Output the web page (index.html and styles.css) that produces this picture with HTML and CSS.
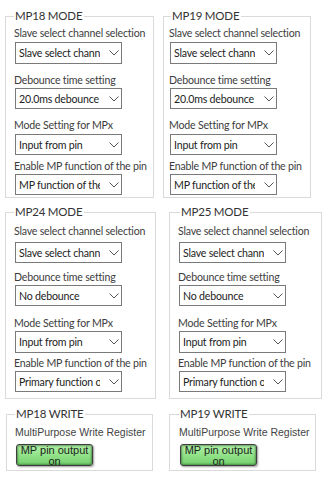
FILE: index.html
```html
<!DOCTYPE html>
<html>
<head>
<meta charset="utf-8">
<link rel="stylesheet" href="styles.css">
</head>
<body>
<div class="page">
  <div class="row row1">
    <fieldset class="box r1a">
      <legend>MP18 MODE</legend>
      <div class="lbl l1">Slave select channel selection</div>
      <div class="sel s1"><span class="val">Slave select channel</span><svg class="chev" viewBox="0 0 10 6"><polyline points="0.5,0.5 5,5 9.5,0.5"/></svg></div>
      <div class="lbl l2">Debounce time setting</div>
      <div class="sel s2"><span class="val">20.0ms debounce</span><svg class="chev" viewBox="0 0 10 6"><polyline points="0.5,0.5 5,5 9.5,0.5"/></svg></div>
      <div class="lbl l3">Mode Setting for MPx</div>
      <div class="sel s3"><span class="val">Input from pin</span><svg class="chev" viewBox="0 0 10 6"><polyline points="0.5,0.5 5,5 9.5,0.5"/></svg></div>
      <div class="lbl l4">Enable MP function of the pin</div>
      <div class="sel s4"><span class="val">MP function of the pin</span><svg class="chev" viewBox="0 0 10 6"><polyline points="0.5,0.5 5,5 9.5,0.5"/></svg></div>
    </fieldset>
    <fieldset class="box r1b">
      <legend>MP19 MODE</legend>
      <div class="lbl l1">Slave select channel selection</div>
      <div class="sel s1"><span class="val">Slave select channel</span><svg class="chev" viewBox="0 0 10 6"><polyline points="0.5,0.5 5,5 9.5,0.5"/></svg></div>
      <div class="lbl l2">Debounce time setting</div>
      <div class="sel s2"><span class="val">20.0ms debounce</span><svg class="chev" viewBox="0 0 10 6"><polyline points="0.5,0.5 5,5 9.5,0.5"/></svg></div>
      <div class="lbl l3">Mode Setting for MPx</div>
      <div class="sel s3"><span class="val">Input from pin</span><svg class="chev" viewBox="0 0 10 6"><polyline points="0.5,0.5 5,5 9.5,0.5"/></svg></div>
      <div class="lbl l4">Enable MP function of the pin</div>
      <div class="sel s4"><span class="val">MP function of the pin</span><svg class="chev" viewBox="0 0 10 6"><polyline points="0.5,0.5 5,5 9.5,0.5"/></svg></div>
    </fieldset>
  </div>
  <div class="row row2">
    <fieldset class="box r2a">
      <legend>MP24 MODE</legend>
      <div class="lbl l1">Slave select channel selection</div>
      <div class="sel s1"><span class="val">Slave select channel</span><svg class="chev" viewBox="0 0 10 6"><polyline points="0.5,0.5 5,5 9.5,0.5"/></svg></div>
      <div class="lbl l2">Debounce time setting</div>
      <div class="sel s2"><span class="val">No debounce</span><svg class="chev" viewBox="0 0 10 6"><polyline points="0.5,0.5 5,5 9.5,0.5"/></svg></div>
      <div class="lbl l3">Mode Setting for MPx</div>
      <div class="sel s3"><span class="val">Input from pin</span><svg class="chev" viewBox="0 0 10 6"><polyline points="0.5,0.5 5,5 9.5,0.5"/></svg></div>
      <div class="lbl l4">Enable MP function of the pin</div>
      <div class="sel s4"><span class="val">Primary function of the pin</span><svg class="chev" viewBox="0 0 10 6"><polyline points="0.5,0.5 5,5 9.5,0.5"/></svg></div>
    </fieldset>
    <fieldset class="box r2b">
      <legend>MP25 MODE</legend>
      <div class="lbl l1">Slave select channel selection</div>
      <div class="sel s1"><span class="val">Slave select channel</span><svg class="chev" viewBox="0 0 10 6"><polyline points="0.5,0.5 5,5 9.5,0.5"/></svg></div>
      <div class="lbl l2">Debounce time setting</div>
      <div class="sel s2"><span class="val">No debounce</span><svg class="chev" viewBox="0 0 10 6"><polyline points="0.5,0.5 5,5 9.5,0.5"/></svg></div>
      <div class="lbl l3">Mode Setting for MPx</div>
      <div class="sel s3"><span class="val">Input from pin</span><svg class="chev" viewBox="0 0 10 6"><polyline points="0.5,0.5 5,5 9.5,0.5"/></svg></div>
      <div class="lbl l4">Enable MP function of the pin</div>
      <div class="sel s4"><span class="val">Primary function of the pin</span><svg class="chev" viewBox="0 0 10 6"><polyline points="0.5,0.5 5,5 9.5,0.5"/></svg></div>
    </fieldset>
  </div>
  <div class="row row3">
    <fieldset class="box r3a">
      <legend>MP18 WRITE</legend>
      <div class="wlbl">MultiPurpose Write Register</div>
      <div class="btn">MP pin output<br>on</div>
    </fieldset>
    <fieldset class="box r3b">
      <legend>MP19 WRITE</legend>
      <div class="wlbl">MultiPurpose Write Register</div>
      <div class="btn">MP pin output<br>on</div>
    </fieldset>
  </div>
</div>
</body>
</html>
```
FILE: styles.css
```css
* { box-sizing: border-box; }
body {
  margin: 0;
  background: #ffffff;
  font-family: Lato, "Noto Sans", sans-serif;
  color: #3a3a3a;
}
.page {
  display: flex;
  flex-direction: column;
  width: 324px;
}
.row { display: flex; }
.row1 { margin-top: 10px; padding-left: 5px; }
.row2 { margin-top: 8px; padding-left: 5px; }
.row3 { margin-top: 9px; padding-left: 6px; }

.box {
  margin: 0;
  border: 1px solid #dadada;
  display: flex;
  flex-direction: column;
  align-items: flex-start;
  min-width: 0;
}
.box legend {
  font-size: 11.5px;
  line-height: 12px;
  padding: 0 2px 0 1px;
  color: #333;
  letter-spacing: -0.2px;
}

.r1a { width: 149px; padding: 0 0 2px 8px; }
.r1b { width: 148px; margin-left: 9px; padding: 0 0 2px 5px; }
.r2a { width: 151px; padding: 0 0 6px 8px; }
.r2b { width: 153px; margin-left: 13px; padding: 0 0 6px 8px; }
.r3a { width: 147px; padding: 0 0 4px 8px; }
.r3b { width: 147px; margin-left: 16px; padding: 0 0 4px 9px; }

.r1b legend { margin-left: 2px; }
.r2b legend { margin-left: 2px; }

.lbl {
  font-size: 10.6px;
  line-height: 14px;
  height: 14px;
  white-space: nowrap;
  color: #3d3d3d;
  letter-spacing: -0.2px;
}
.sel {
  width: 107px;
  height: 21px;
  border: 1px solid #7a7a7a;
  background: #fff;
  display: flex;
  align-items: center;
  padding-left: 3px;
  margin-left: 1px;
}
.sel .val {
  flex: 0 0 81px;
  overflow: hidden;
  white-space: nowrap;
  font-size: 10.6px;
  line-height: 14px;
  color: #222;
  letter-spacing: -0.2px;
}
.chev {
  width: 10px;
  height: 6px;
  margin-left: 9px;
  fill: none;
  stroke: #555;
  stroke-width: 1;
}

/* row 1 vertical rhythm */
.row1 .l1 { margin-top: 4px; }
.row1 .s1 { margin-top: 2px; height: 22px; }
.row1 .l2 { margin-top: 9px; }
.row1 .s2 { margin-top: 1px; }
.row1 .l3 { margin-top: 9px; }
.row1 .s3 { margin-top: 2px; }
.row1 .l4 { margin-top: 4px; }
.row1 .s4 { margin-top: 1px; }

/* row 2 vertical rhythm */
.row2 .l1 { margin-top: 6px; }
.row2 .s1 { margin-top: 4px; }
.row2 .l2 { margin-top: 7px; }
.row2 .s2 { margin-top: 1px; }
.row2 .l3 { margin-top: 10px; }
.row2 .s3 { margin-top: 1px; height: 22px; }
.row2 .l4 { margin-top: 3px; }
.row2 .s4 { margin-top: 1px; }

.wlbl {
  margin-top: 5px;
  font-family: "Liberation Sans", Arial, sans-serif;
  font-size: 10.5px;
  line-height: 14px;
  color: #444;
  white-space: nowrap;
}
.btn {
  margin-top: 5px;
  margin-left: 1px;
  width: 77px;
  height: 22px;
  border: 1px solid #3e3e3e;
  border-radius: 3px;
  background: linear-gradient(#b3f2a8, #8fe086 55%, #74d16c);
  box-shadow: inset 0 0 2px 1px rgba(30, 70, 30, 0.5), 1px 1px 2px rgba(0,0,0,0.4);
  font-family: "Liberation Sans", Arial, sans-serif;
  font-size: 11px;
  line-height: 11px;
  text-align: center;
  color: #1b261b;
  padding-top: 0;
  overflow: hidden;
}
```
